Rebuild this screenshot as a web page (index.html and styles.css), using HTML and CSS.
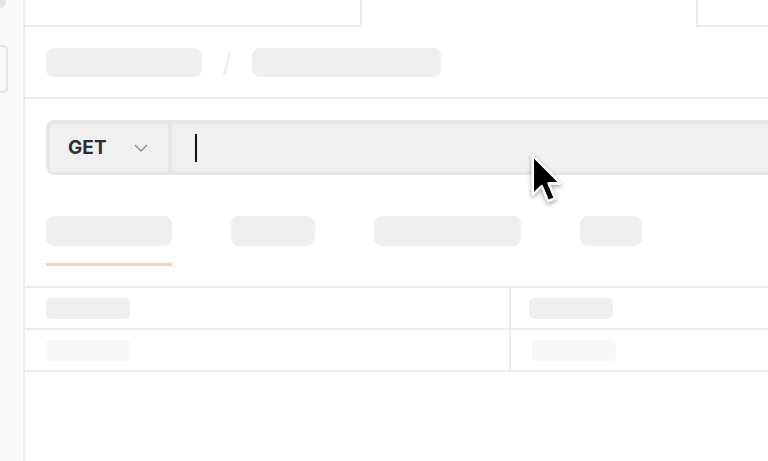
FILE: index.html
```html
<!DOCTYPE html>
<html>
<head>
<meta charset="utf-8">
<link rel="stylesheet" href="styles.css">
</head>
<body>
<div class="app">
  <aside class="sidebar">
    <div class="side-dot"></div>
    <div class="side-box"></div>
  </aside>
  <main class="main">
    <div class="tabstrip">
      <div class="tab tab-first"></div>
      <div class="tab tab-active"></div>
      <div class="tab tab-last"></div>
    </div>
    <div class="crumbs">
      <div class="sk crumb crumb-1"></div>
      <span class="slash">/</span>
      <div class="sk crumb crumb-2"></div>
    </div>
    <div class="urlbar">
      <div class="method">
        <span class="method-name">GET</span>
        <svg class="chev" width="14" height="9" viewBox="0 0 14 9"><path d="M1.5 1.5 L7 7 L12.5 1.5" fill="none" stroke="#8a8a8a" stroke-width="1.4" stroke-linecap="round" stroke-linejoin="round"/></svg>
      </div>
      <div class="url-input"><span class="caret"></span></div>
    </div>
    <div class="subtabs">
      <div class="subtab active"><div class="sk st-1"></div></div>
      <div class="subtab"><div class="sk st-2"></div></div>
      <div class="subtab"><div class="sk st-3"></div></div>
      <div class="subtab"><div class="sk st-4"></div></div>
    </div>
    <div class="table">
      <div class="row">
        <div class="cell cell-key"><div class="cell-sk"></div></div>
        <div class="cell cell-val"><div class="cell-sk"></div></div>
      </div>
      <div class="row">
        <div class="cell cell-key"><div class="cell-sk faint"></div></div>
        <div class="cell cell-val shifted"><div class="cell-sk faint"></div></div>
      </div>
    </div>
  </main>
  <svg class="pointer" width="39" height="64" viewBox="-2 -2 17 28">
    <path d="M0.5 0.5 L0.5 17.5 L4.4 13.8 L7.2 20.4 L10.2 19.1 L7.4 12.6 L12.6 12.6 Z" fill="#000" stroke="#fff" stroke-width="1.1" stroke-linejoin="round"/>
  </svg>
</div>
</body>
</html>
```

FILE: styles.css
```css
html, body {
  margin: 0;
  padding: 0;
  background: #ffffff;
  font-family: "Inter", "Liberation Sans", sans-serif;
}

.app {
  position: relative;
  width: 768px;
  height: 461px;
  overflow: hidden;
  display: flex;
}

.sidebar {
  position: relative;
  width: 23px;
  flex: none;
  background: #f9f9f9;
  border-right: 2px solid #ededed;
}

.side-dot {
  position: absolute;
  left: -6px;
  top: -6px;
  width: 12px;
  height: 14px;
  border-radius: 6px;
  background: #e4e4e4;
}

.side-box {
  position: absolute;
  left: -12px;
  top: 45px;
  width: 16px;
  height: 44px;
  border: 2px solid #e4e4e4;
  border-radius: 5px;
}

.main {
  flex: 1;
  min-width: 0;
  display: flex;
  flex-direction: column;
}

.tabstrip {
  display: flex;
  height: 27px;
  flex: none;
}

.tab {
  box-sizing: border-box;
  height: 27px;
}

.tab-first {
  width: 337px;
  border-right: 2px solid #ededed;
  border-bottom: 2px solid #ededed;
}

.tab-active {
  width: 334px;
}

.tab-last {
  flex: 1;
  border-left: 2px solid #ededed;
  border-bottom: 2px solid #ededed;
}

.sk {
  background: #efefef;
  border-radius: 8px;
}

.crumbs {
  height: 72px;
  flex: none;
  box-sizing: border-box;
  border-bottom: 2px solid #ededed;
  display: flex;
  align-items: center;
  padding: 2px 0 1px 21px;
}

.crumb {
  height: 29px;
}

.crumb-1 {
  width: 156px;
}

.crumb-2 {
  width: 189px;
}

.slash {
  width: 50px;
  text-align: center;
  font-size: 26px;
  line-height: 29px;
  color: #e8e8e8;
  font-weight: 300;
}

.urlbar {
  margin: 21px 0 0 21px;
  width: 760px;
  height: 55px;
  box-sizing: border-box;
  border: 4px solid #e7e7e7;
  border-right: none;
  border-radius: 8px 0 0 8px;
  background: #e7e7e7;
  display: flex;
  gap: 4px;
  flex: none;
}

.method {
  width: 118px;
  background: #f0f0f0;
  border-radius: 4px 0 0 4px;
  display: flex;
  align-items: center;
  box-sizing: border-box;
  padding-left: 18px;
}

.method-name {
  font-size: 19px;
  font-weight: 700;
  color: #2e2e2e;
  letter-spacing: 0.1px;
}

.chev {
  margin-left: 27px;
  margin-top: 2px;
}

.url-input {
  flex: 1;
  background: #f0f0f0;
  display: flex;
  align-items: center;
  padding-left: 23px;
}

.caret {
  width: 2px;
  height: 28px;
  background: #111;
}

.subtabs {
  display: flex;
  gap: 59px;
  padding-left: 21px;
  margin-top: 41px;
  height: 50px;
  flex: none;
}

.subtab {
  box-sizing: border-box;
  height: 50px;
}

.subtab.active {
  border-bottom: 3px solid #f9cfc0;
}

.subtab .sk {
  height: 30px;
}

.st-1 { width: 126px; }
.st-2 { width: 84px; }
.st-3 { width: 147px; }
.st-4 { width: 62px; }

.table {
  margin-top: 20px;
  border-top: 2px solid #ededed;
}

.row {
  display: flex;
  height: 42px;
  box-sizing: border-box;
  border-bottom: 2px solid #ededed;
}

.cell {
  display: flex;
  align-items: center;
  box-sizing: border-box;
}

.cell-key {
  width: 486px;
  padding-left: 21px;
  border-right: 2px solid #ededed;
}

.cell-val {
  flex: 1;
  padding-left: 18px;
}

.cell-val.shifted {
  padding-left: 21px;
}

.cell-sk {
  width: 84px;
  height: 21px;
  border-radius: 5px;
  background: #efefef;
}

.cell-sk.faint {
  background: #f7f7f7;
}

.pointer {
  position: absolute;
  left: 527px;
  top: 150px;
  filter: drop-shadow(0 2px 2px rgba(0, 0, 0, 0.35));
}
```
